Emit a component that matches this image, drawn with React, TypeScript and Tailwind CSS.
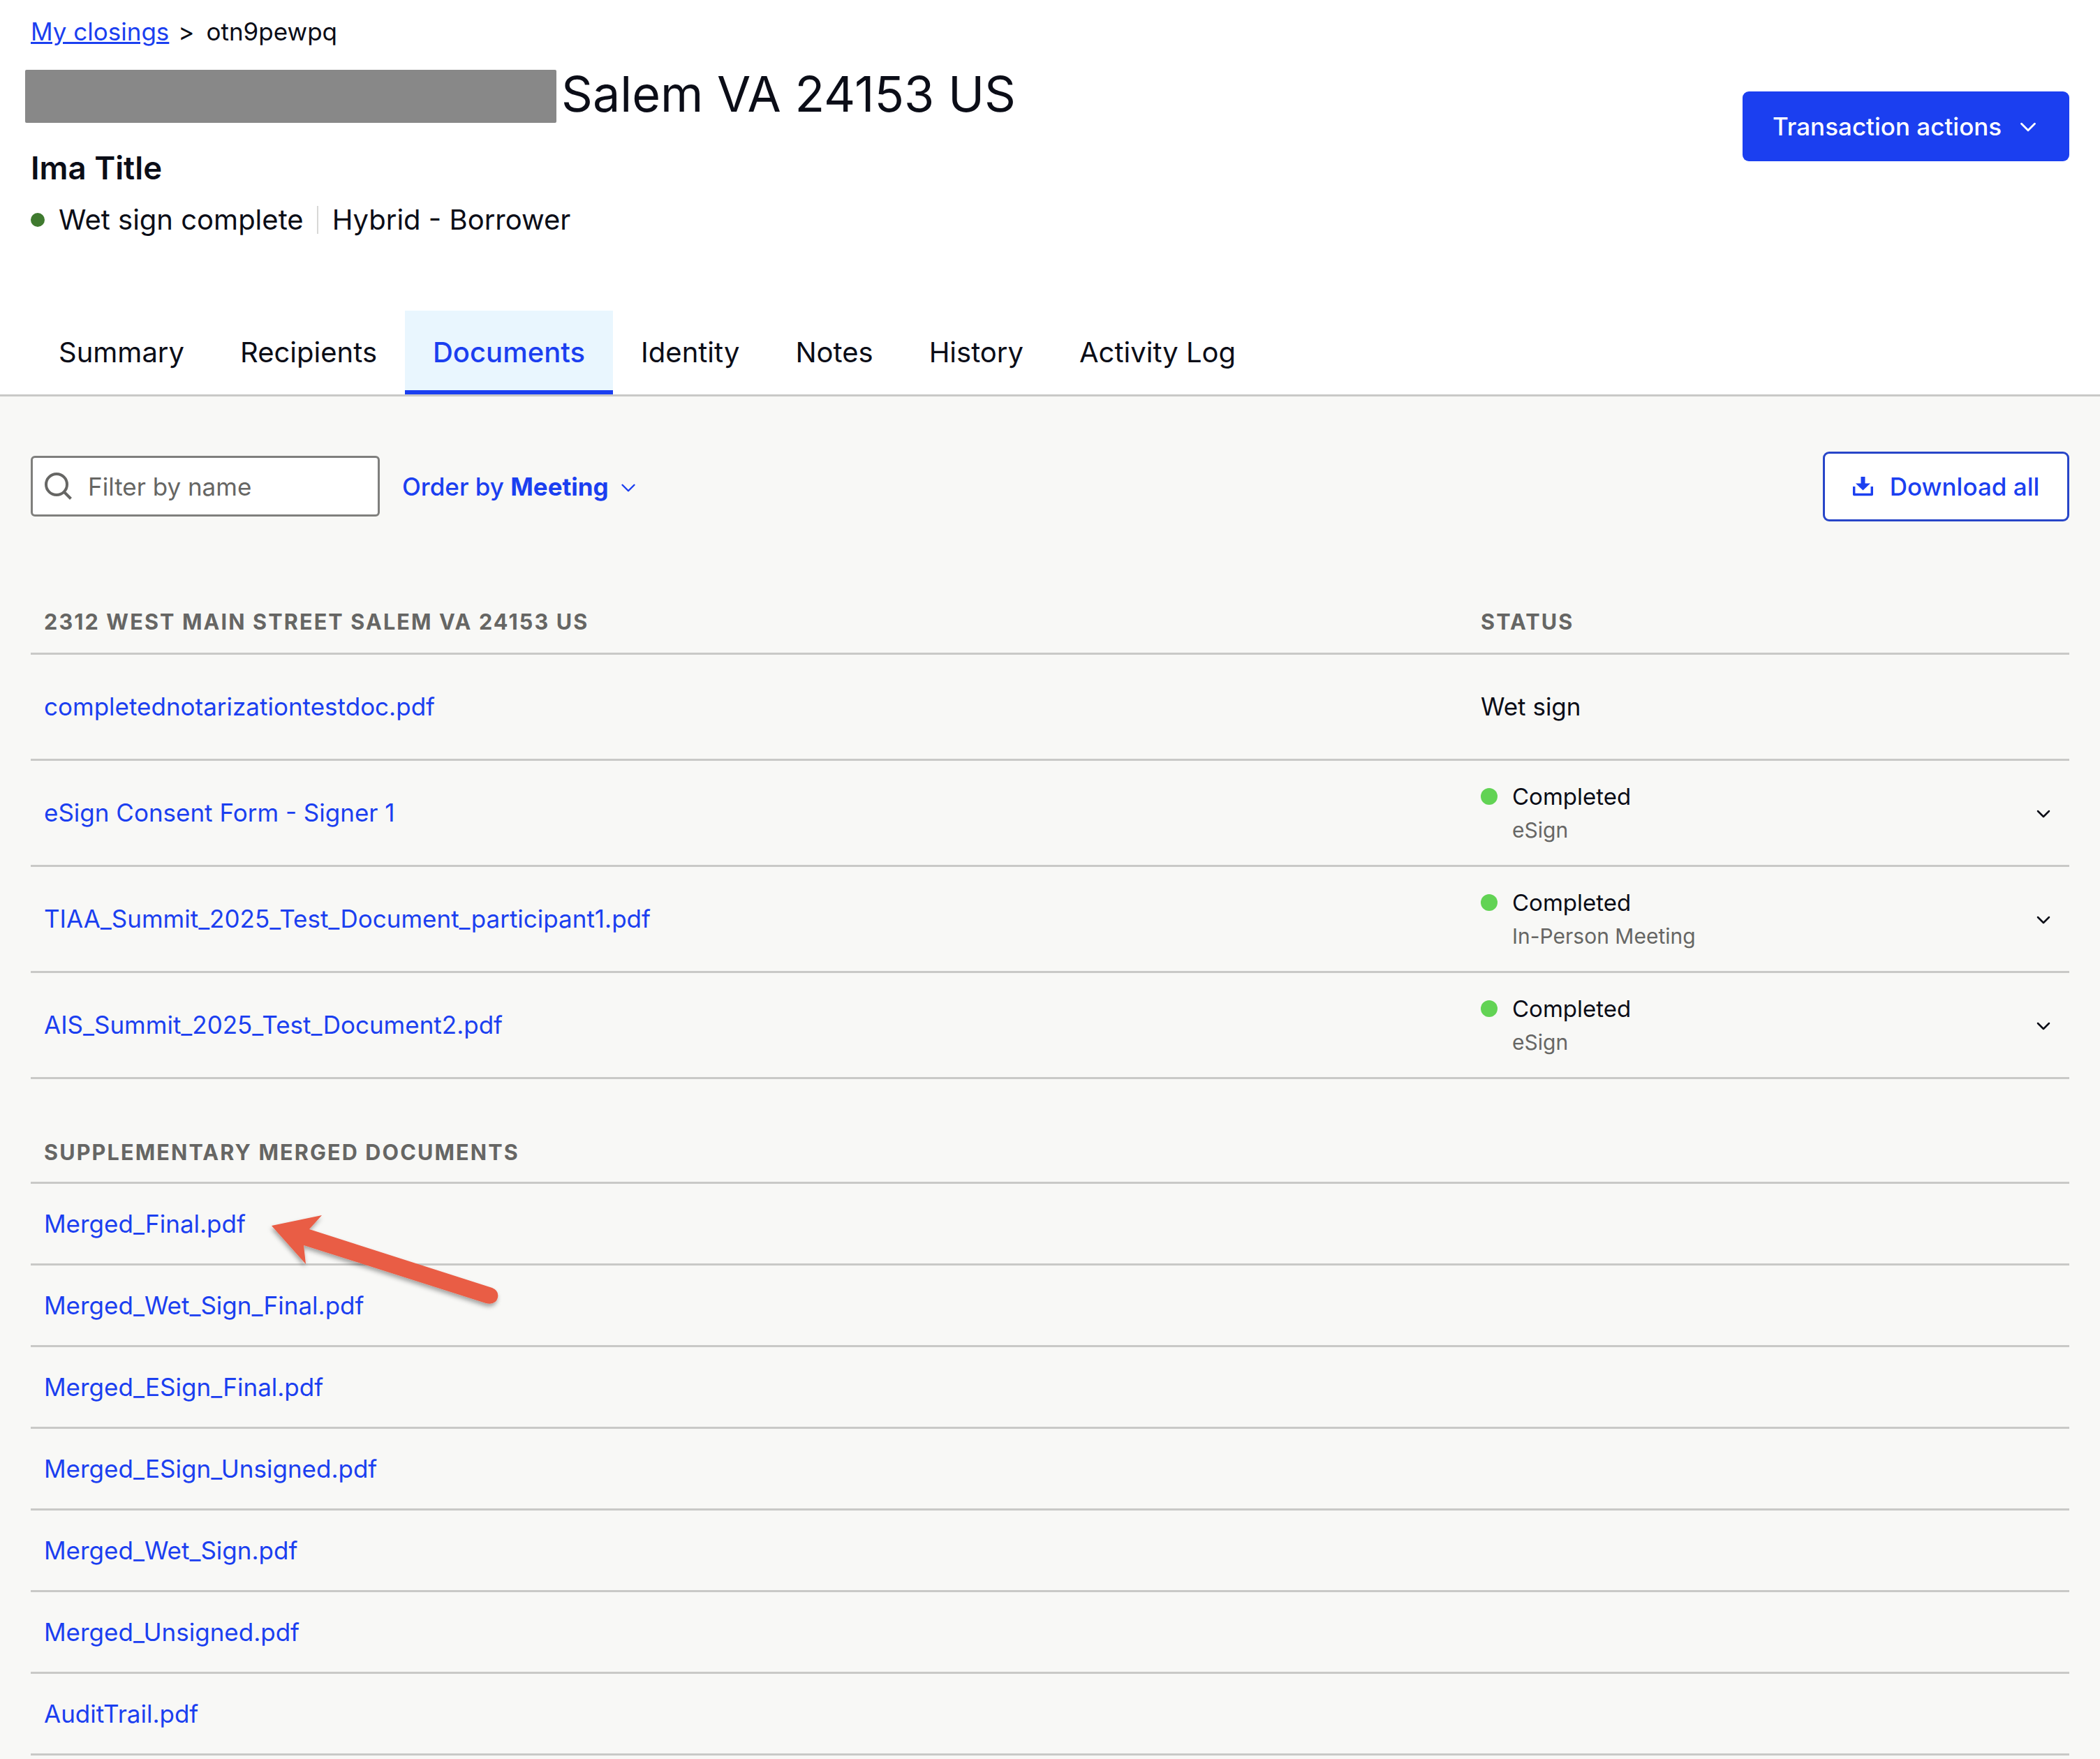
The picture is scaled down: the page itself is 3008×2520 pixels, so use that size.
import React from "react";
import { ChevronDown } from "lucide-react";

const docs = [
  { name: "completednotarizationtestdoc.pdf", plain: "Wet sign" },
  { name: "eSign Consent Form - Signer 1", sub: "eSign" },
  { name: "TIAA_Summit_2025_Test_Document_participant1.pdf", sub: "In-Person Meeting" },
  { name: "AIS_Summit_2025_Test_Document2.pdf", sub: "eSign" },
];
const merged = [
  "Merged_Final.pdf",
  "Merged_Wet_Sign_Final.pdf",
  "Merged_ESign_Final.pdf",
  "Merged_ESign_Unsigned.pdf",
  "Merged_Wet_Sign.pdf",
  "Merged_Unsigned.pdf",
  "AuditTrail.pdf",
];
const tabs = ["Summary", "Recipients", "Documents", "Identity", "Notes", "History", "Activity Log"];

function DownloadIcon() {
  return (
    <svg width="29" height="28" viewBox="0 0 29 28" fill="none" className="shrink-0">
      <path d="M1.7 14V25.5H27.3V14" stroke="#1b3ff0" strokeWidth="3.4" strokeLinejoin="round" />
      <path d="M14.5 0V11" stroke="#1b3ff0" strokeWidth="6" />
      <path d="M4 9.5H25L14.5 19.5Z" fill="#1b3ff0" />
    </svg>
  );
}

function SearchIcon() {
  return (
    <svg width="44" height="44" viewBox="0 0 44 44" fill="none" className="shrink-0">
      <circle cx="20" cy="19" r="15" stroke="#666664" strokeWidth="4" />
      <path d="M31 30L40.5 39.5" stroke="#666664" strokeWidth="4" />
    </svg>
  );
}

export default function App() {
  return (
    <div className="relative w-[3008px] h-[2520px] overflow-hidden bg-white text-[#0b0d17] font-['Inter',sans-serif]">
      <header className="h-[568px] flex flex-col border-b-[3px] border-[#c9c9c7] relative">
        <div className="flex justify-between px-[44px]">
          <div className="flex flex-col">
            <div className="flex items-center h-[46px] mt-[22px] text-[35px] leading-[46px]">
              <a className="text-[#1b3ff0] underline">My closings</a>
              <span className="ml-[13px]">&gt;</span>
              <span className="ml-[17px]">otn9pewpq</span>
            </div>
            <div className="flex items-start -ml-[8px] mt-[32px] h-[76px]">
              <span className="w-[761px] h-[76px] bg-[#888888] rounded-[2px]" />
              <h1 className="ml-[7px] text-[70px] leading-[70px] font-normal">Salem VA 24153 US</h1>
            </div>
            <div className="mt-[39px] h-[52px] text-[45.5px] leading-[52px] font-semibold">Ima Title</div>
            <div className="mt-[23px] flex items-center h-[50px] text-[40px] leading-[50px]">
              <span className="w-[20px] h-[20px] rounded-full bg-[#3f7a2f]" />
              <span className="ml-[20px]">Wet sign complete</span>
              <span className="ml-[19px] w-[2px] h-[40px] bg-[#d8d8d6]" />
              <span className="ml-[20px]">Hybrid - Borrower</span>
            </div>
          </div>
          <button className="mt-[131px] w-[468px] h-[100px] rounded-[9px] bg-[#1b3ff0] text-white text-[35px] font-medium flex items-center pl-[43px]">
            Transaction actions
            <ChevronDown className="ml-[19px] mt-[2px] w-[38px] h-[38px]" strokeWidth={1.8} />
          </button>
        </div>
        <nav className="absolute left-[44px] top-[445px] h-[120px] flex">
          {tabs.map((t) =>
            t === "Documents" ? (
              <div key={t} className="h-[120px] px-[40px] flex items-center bg-[#e9f6fe] border-b-[6px] border-[#1b3ff0] text-[#1b3ff0] text-[40px] font-medium pt-[5px]">
                {t}
              </div>
            ) : (
              <div key={t} className="h-[120px] px-[40px] flex items-center text-[40px] pb-[1px]">
                {t}
              </div>
            )
          )}
        </nav>
      </header>

      <main className="bg-[#f8f8f6] h-[1952px] px-[44px]">
        <div className="flex items-center justify-between h-[260px] pb-[3px]">
          <div className="flex items-center">
            <div className="w-[500px] h-[87px] flex items-center bg-white border-[3px] border-[#7f7f7d] rounded-[6px] pl-[14px] text-[35px] text-[#666664]">
              <SearchIcon />
              <span className="ml-[21px] pt-[2px]">Filter by name</span>
            </div>
            <div className="ml-[32px] pt-[2px] flex items-center text-[35px] text-[#1b3ff0] font-medium">
              Order by&nbsp;<b className="font-bold">Meeting</b>
              <ChevronDown className="ml-[11px] mt-[2px] w-[34px] h-[34px]" strokeWidth={1.7} />
            </div>
          </div>
          <button className="w-[353px] h-[100px] flex items-center justify-center bg-white border-[3px] border-[#2846c8] rounded-[9px] text-[35px] font-medium text-[#1b3ff0]">
            <DownloadIcon />
            <span className="ml-[24px] pt-[1px]">Download all</span>
          </button>
        </div>

        <div className="grid grid-cols-[2077px_1fr] h-[110px] border-b-[3px] border-[#c9c9c7] items-end pb-[24px] text-[30.6px] leading-[40px] font-bold tracking-[2.12px] text-[#666664]">
          <div className="pl-[19px]">2312 WEST MAIN STREET SALEM VA 24153 US</div>
          <div>STATUS</div>
        </div>

        {docs.map((d) => (
          <div key={d.name} className="grid grid-cols-[2077px_1fr] h-[152px] border-b-[3px] border-[#c9c9c7] items-center">
            <a className="pl-[19px] text-[35px] text-[#1b3ff0]">{d.name}</a>
            {d.plain ? (
              <div className="text-[35px]">{d.plain}</div>
            ) : (
              <div className="flex items-center justify-between pr-[21px]">
                <div className="flex flex-col">
                  <div className="flex items-center text-[33px] leading-[48px]">
                    <span className="w-[24px] h-[24px] rounded-full bg-[#62d354]" />
                    <span className="ml-[21px]">Completed</span>
                  </div>
                  <div className="pl-[45px] text-[30px] leading-[48px] text-[#666664]">{d.sub}</div>
                </div>
                <ChevronDown className="mt-[3px] w-[32px] h-[32px] text-[#0b0d17]" strokeWidth={1.9} />
              </div>
            )}
          </div>
        ))}

        <div className="h-[150px] border-b-[3px] border-[#c9c9c7] flex items-end pb-[22px] pl-[19px] text-[30.6px] leading-[40px] font-bold tracking-[2.12px] text-[#666664]">
          SUPPLEMENTARY MERGED DOCUMENTS
        </div>

        {merged.map((m) => (
          <div key={m} className="h-[117px] border-b-[3px] border-[#c9c9c7] flex items-center pl-[19px] text-[35px] text-[#1b3ff0]">
            {m}
          </div>
        ))}
      </main>

      <svg className="absolute left-[370px] top-[1725px]" width="370" height="170" viewBox="370 1725 370 170" fill="none">
        <defs>
          <filter id="arrowShadow" x="-10%" y="-10%" width="120%" height="130%">
            <feDropShadow dx="-1" dy="4" stdDeviation="3" floodColor="#000" floodOpacity="0.35" />
          </filter>
        </defs>
        <path
          d="M389 1756 L461 1741 L443 1761 L705 1845 Q715 1849 713 1859 Q710 1870 696 1867 L435 1784 L438 1811 Z"
          fill="#e95d45"
          filter="url(#arrowShadow)"
        />
      </svg>
    </div>
  );
}
